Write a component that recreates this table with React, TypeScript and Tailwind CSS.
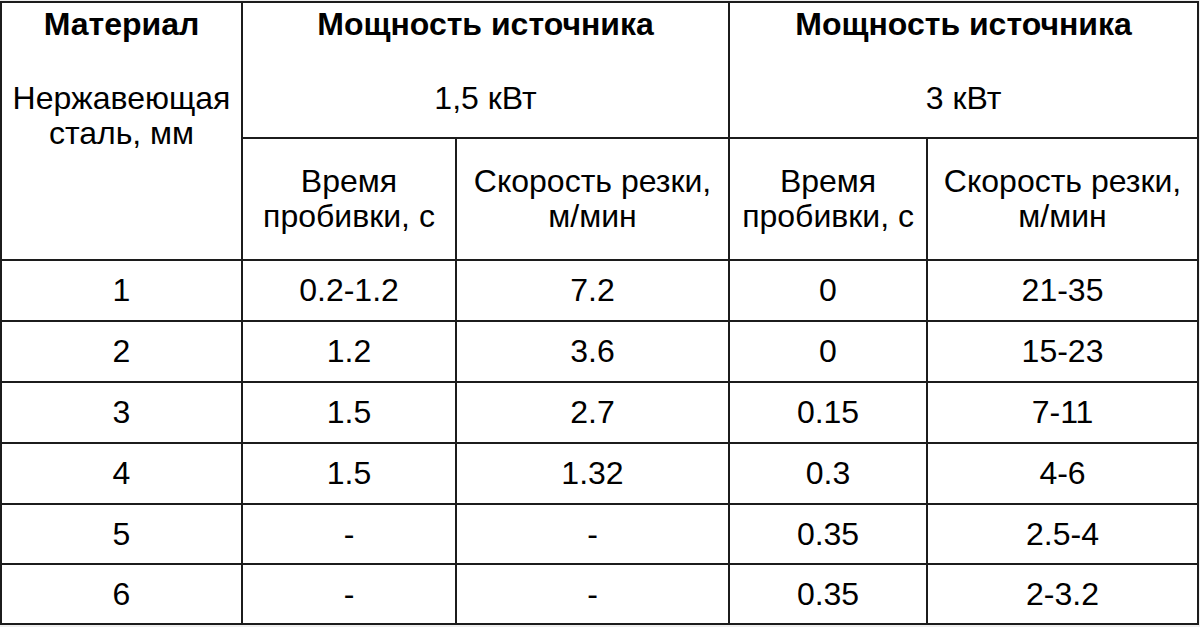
import React from "react";

/* ───────────── DATA ───────────── */

const rows: string[][] = [
  ["1", "0.2-1.2", "7.2", "0", "21-35"],
  ["2", "1.2", "3.6", "0", "15-23"],
  ["3", "1.5", "2.7", "0.15", "7-11"],
  ["4", "1.5", "1.32", "0.3", "4-6"],
  ["5", "-", "-", "0.35", "2.5-4"],
  ["6", "-", "-", "0.35", "2-3.2"],
];

const rowHeights = ["h-[61px]", "h-[61px]", "h-[61px]", "h-[61px]", "h-[60px]", "h-[60px]"];

const cell = "border-2 border-[#1c1c1c] text-center p-0";

/* ───────────── PAGE ───────────── */

export default function App() {
  return (
    <div
      className="w-[1200px] h-[627px] bg-[#eeeeee] overflow-hidden pt-px pl-0"
      style={{ fontFamily: '"Liberation Sans", Arial, sans-serif' }}
    >
      <table className="table-fixed border-collapse bg-white text-black text-[32px] leading-[35px] w-[1197px]">
        <colgroup>
          <col className="w-[241px]" />
          <col className="w-[214px]" />
          <col className="w-[273px]" />
          <col className="w-[198px]" />
          <col className="w-[271px]" />
        </colgroup>
        <tbody>
          {/* HEADER: power groups */}
          <tr className="h-[136px]">
            <td rowSpan={2} className={`${cell} align-top pt-[4px]`}>
              <p className="font-bold">Материал</p>
              <p className="mt-[39px]">
                Нержавеющая
                <br />
                сталь, мм
              </p>
            </td>
            <td colSpan={2} className={`${cell} align-top pt-[4px]`}>
              <p className="font-bold">Мощность источника</p>
              <p className="mt-[39px]">1,5 кВт</p>
            </td>
            <td colSpan={2} className={`${cell} align-top pt-[4px]`}>
              <p className="font-bold">Мощность источника</p>
              <p className="mt-[39px]">3 кВт</p>
            </td>
          </tr>

          {/* HEADER: columns */}
          <tr className="h-[122px]">
            <td className={`${cell} align-middle`}>
              Время
              <br />
              пробивки, с
            </td>
            <td className={`${cell} align-middle`}>
              Скорость резки,
              <br />
              м/мин
            </td>
            <td className={`${cell} align-middle`}>
              Время
              <br />
              пробивки, с
            </td>
            <td className={`${cell} align-middle`}>
              Скорость резки,
              <br />
              м/мин
            </td>
          </tr>

          {/* DATA */}
          {rows.map((r, i) => (
            <tr key={i} className={rowHeights[i]}>
              {r.map((v, j) => (
                <td key={j} className={`${cell} align-middle`}>
                  {v}
                </td>
              ))}
            </tr>
          ))}
        </tbody>
      </table>
    </div>
  );
}
